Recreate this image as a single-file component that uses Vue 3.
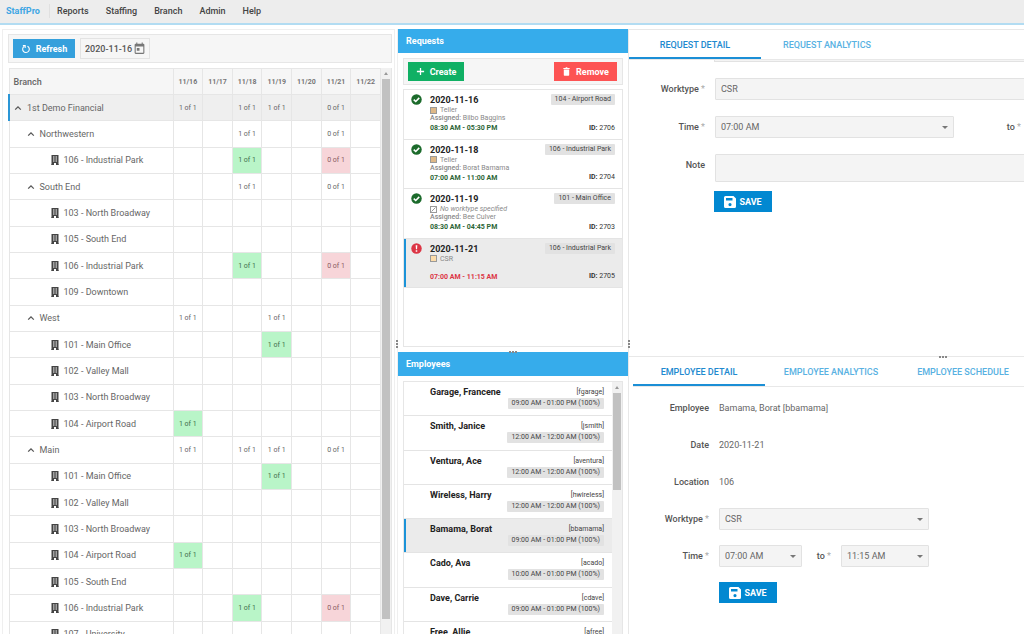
<script setup>
import { ref } from 'vue'

const days = ['11/16', '11/17', '11/18', '11/19', '11/20', '11/21', '11/22']

const row = (name, level, cells = {}) => ({ name, level, cells })
const rows = [
  row('1st Demo Financial', 0, { 0: 1, 2: 1, 3: 1, 5: 0 }),
  row('Northwestern', 1, { 2: 1, 5: 0 }),
  row('106 - Industrial Park', 2, { 2: 1, 5: 0 }),
  row('South End', 1, { 2: 1, 5: 0 }),
  row('103 - North Broadway', 2),
  row('105 - South End', 2),
  row('106 - Industrial Park', 2, { 2: 1, 5: 0 }),
  row('109 - Downtown', 2),
  row('West', 1, { 0: 1, 3: 1 }),
  row('101 - Main Office', 2, { 3: 1 }),
  row('102 - Valley Mall', 2),
  row('103 - North Broadway', 2),
  row('104 - Airport Road', 2, { 0: 1 }),
  row('Main', 1, { 0: 1, 2: 1, 3: 1, 5: 0 }),
  row('101 - Main Office', 2, { 3: 1 }),
  row('102 - Valley Mall', 2),
  row('103 - North Broadway', 2),
  row('104 - Airport Road', 2, { 0: 1 }),
  row('105 - South End', 2),
  row('106 - Industrial Park', 2, { 2: 1, 5: 0 }),
  row('107 - University', 2),
]

const cellClass = (r, i) => {
  if (r.level < 2 || !(i in r.cells)) return ''
  return r.cells[i] ? 'filled' : 'short'
}

const requests = [
  { id: 2706, date: '2020-11-16', type: 'Teller', who: 'Bilbo Baggins', time: '08:30 AM - 05:30 PM', place: '104 - Airport Road' },
  { id: 2704, date: '2020-11-18', type: 'Teller', who: 'Borat Bamama', time: '07:00 AM - 11:00 AM', place: '106 - Industrial Park' },
  { id: 2703, date: '2020-11-19', type: '', who: 'Bee Culver', time: '08:30 AM - 04:45 PM', place: '101 - Main Office' },
  { id: 2705, date: '2020-11-21', type: 'CSR', who: '', time: '07:00 AM - 11:15 AM', place: '106 - Industrial Park' },
]

const employees = [
  ['Garage, Francene', 'fgarage', '09:00 AM - 01:00 PM (100%)'],
  ['Smith, Janice', 'jsmith', '12:00 AM - 12:00 AM (100%)'],
  ['Ventura, Ace', 'aventura', '12:00 AM - 12:00 AM (100%)'],
  ['Wireless, Harry', 'hwireless', '12:00 AM - 12:00 AM (100%)'],
  ['Bamama, Borat', 'bbamama', '09:00 AM - 01:00 PM (100%)'],
  ['Cado, Ava', 'acado', '10:00 AM - 01:00 PM (100%)'],
  ['Dave, Carrie', 'cdave', '09:00 AM - 01:00 PM (100%)'],
  ['Free, Allie', 'afree', '09:00 AM - 01:00 PM (100%)'],
]

const startDate = ref('2020-11-16')
const requestId = ref(2705)
const employeeId = ref('bbamama')
</script>

<template>
  <div class="app">
    <header class="nav">
      <a class="brand" href="#">StaffPro</a>
      <nav class="menu">
        <a v-for="m in ['Reports', 'Staffing', 'Branch', 'Admin', 'Help']" :key="m" href="#">{{ m }}</a>
      </nav>
    </header>

    <main class="work">
      <section class="branches">
        <div class="bar">
          <button class="btn refresh" type="button">
            <svg viewBox="0 0 24 24" width="10" height="10" fill="none" stroke="#fff" stroke-width="2.6">
              <path d="M15.5 5.2A8 8 0 1 1 8.2 5.3" />
              <path d="M4.5 3.5H10V9.5" />
            </svg>
            Refresh
          </button>
          <label class="date">
            <input v-model="startDate" type="text" aria-label="Start date" />
            <svg viewBox="0 0 24 24" width="13" height="13" fill="#777">
              <path d="M19 3h-1V1h-2v2H8V1H6v2H5a2 2 0 0 0-2 2v15a2 2 0 0 0 2 2h14a2 2 0 0 0 2-2V5a2 2 0 0 0-2-2zm0 17H5V8.500h14zM7 11h5v5H7z" />
            </svg>
          </label>
        </div>
        <div class="gridbox">
          <table>
            <thead>
              <tr>
                <th class="name">Branch</th>
                <th v-for="d in days" :key="d">{{ d }}</th>
              </tr>
            </thead>
            <tbody>
              <tr v-for="(r, n) in rows" :key="n" :class="{ current: n === 0 }">
                <td class="name" :class="'level' + r.level">
                  <span>
                    <svg v-if="r.level < 2" viewBox="0 0 8 8" width="8" height="8" fill="none" stroke="#555" stroke-width="1.300">
                      <path d="M1.200 5.600 4 2.900l2.800 2.700" />
                    </svg>
                    <svg v-else viewBox="0 0 16 20" width="8" height="10">
                      <path fill="#444" fill-rule="evenodd" d="M1 0h14v19h1v1h-6v-4H6v4H0v-1h1zM4 3v2h2V3zm3 0v2h2V3zm3 0v2h2V3zM4 7v2h2V7zm3 0v2h2V7zm3 0v2h2V7zM4 11v2h2v-2zm3 0v2h2v-2zm3 0v2h2v-2z" />
                    </svg>
                    {{ r.name }}
                  </span>
                </td>
                <td v-for="(d, i) in days" :key="d" :class="cellClass(r, i)">
                  {{ i in r.cells ? r.cells[i] + ' of 1' : '' }}
                </td>
              </tr>
            </tbody>
          </table>
          <div class="scroll"><i class="up"></i><i class="thumb long"></i></div>
        </div>
      </section>

      <div class="split"><i class="dots"></i></div>

      <section class="lists">
        <div class="requests">
          <h2>Requests</h2>
          <div class="bar actions">
            <button class="btn create" type="button">
              <svg viewBox="0 0 10 10" width="9" height="9" stroke="#fff" stroke-width="1.400"><path d="M5 1v8M1 5h8" /></svg>
              Create
            </button>
            <button class="btn remove" type="button">
              <svg viewBox="0 0 10 10" width="9" height="9" fill="#fff"><path d="M1.500 1h2.300l.5-.6h1.400l.5.6h2.300v1.100h-7zM2 2.700h6V9a.8.800 0 0 1-.8.800H2.800A.8.800 0 0 1 2 9z" /></svg>
              Remove
            </button>
          </div>
          <div class="box">
            <ul class="reqlist">
              <li v-for="r in requests" :key="r.id" :class="{ on: r.id === requestId }" @click="requestId = r.id">
                <svg class="state" viewBox="0 0 20 20" width="11" height="11">
                  <circle cx="10" cy="10" r="9.500" :fill="r.who ? '#1c6b2c' : '#dc3545'" />
                  <path v-if="r.who" d="M5 10.300 8.600 13.700 15 7" fill="none" stroke="#fff" stroke-width="2.800" />
                  <path v-else d="M8.500 4h3l-.5 7.500H9zM8.600 13h2.800v2.800H8.600z" fill="#fff" />
                </svg>
                <div class="info">
                  <b class="day">{{ r.date }}</b>
                  <span class="type" :class="{ none: !r.type }">
                    <svg viewBox="0 0 7 7" width="7" height="7">
                      <rect x=".5" y=".5" width="6" height="6" :fill="r.type === 'Teller' ? '#deb887' : r.type ? '#fcdcaa' : '#fff'" stroke="#999" />
                      <path v-if="!r.type" d="M1.500 5.500l4-4" stroke="#999" />
                    </svg>
                    {{ r.type || 'No worktype specified' }}
                  </span>
                  <span class="who"><template v-if="r.who"><b>Assigned:</b> {{ r.who }}</template></span>
                  <b class="time" :class="{ open: !r.who }">{{ r.time }}</b>
                </div>
                <div class="side">
                  <span class="tag">{{ r.place }}</span>
                  <span class="id"><b>ID:</b> {{ r.id }}</span>
                </div>
              </li>
            </ul>
          </div>
          <div class="hsplit"><i class="hdots"></i></div>
        </div>

        <div class="employees">
          <h2>Employees</h2>
          <div class="box">
            <ul class="emplist">
              <li v-for="e in employees" :key="e[1]" :class="{ on: e[1] === employeeId }" @click="employeeId = e[1]">
                <b class="person">{{ e[0] }}</b>
                <span class="login">[{{ e[1] }}]</span>
                <span class="tag hours">{{ e[2] }}</span>
              </li>
            </ul>
            <div class="scroll"><i class="up"></i><i class="thumb short-thumb"></i></div>
          </div>
        </div>
      </section>

      <div class="split thin"><i class="dots"></i></div>

      <section class="details">
        <div class="pane request-pane">
          <div class="tabs">
            <button class="active" type="button">REQUEST DETAIL</button>
            <button type="button">REQUEST ANALYTICS</button>
          </div>
          <form class="form wide" @submit.prevent>
            <div class="cut"></div>
            <div class="field">
              <label for="rw">Worktype <em>*</em></label>
              <input id="rw" class="ctl" type="text" value="CSR" />
            </div>
            <div class="field">
              <label for="rf">Time <em>*</em></label>
              <div class="drop half"><select id="rf" class="ctl"><option>07:00 AM</option></select></div>
              <label class="far" for="rt">to <em>*</em></label>
              <div class="drop half"><select id="rt" class="ctl"><option>11:15 AM</option></select></div>
            </div>
            <div class="field">
              <label for="rn">Note</label>
              <textarea id="rn" class="ctl note"></textarea>
            </div>
            <button class="save" type="submit">
              <svg viewBox="0 0 12 12" width="12" height="12"><path fill="#fff" fill-rule="evenodd" d="M1.500 0h8L12 2.500v8a1.500 1.500 0 0 1-1.500 1.500h-9A1.500 1.500 0 0 1 0 10.500v-9A1.500 1.500 0 0 1 1.500 0zM2 2v2.500h6.500V2zM6 7a1.600 1.600 0 1 0 0 3.200A1.600 1.600 0 0 0 6 7z" /></svg>
              SAVE
            </button>
          </form>
          <div class="hsplit"><i class="hdots low"></i></div>
        </div>

        <div class="pane employee-pane">
          <div class="tabs">
            <button class="active" type="button">EMPLOYEE DETAIL</button>
            <button type="button">EMPLOYEE ANALYTICS</button>
            <button type="button">EMPLOYEE SCHEDULE</button>
          </div>
          <form class="form narrow" @submit.prevent>
            <div class="field"><span class="label">Employee</span><output>Bamama, Borat [bbamama]</output></div>
            <div class="field"><span class="label">Date</span><output>2020-11-21</output></div>
            <div class="field"><span class="label">Location</span><output>106</output></div>
            <div class="field">
              <label for="ew">Worktype <em>*</em></label>
              <div class="drop"><select id="ew" class="ctl"><option>CSR</option></select></div>
            </div>
            <div class="field">
              <label for="ef">Time <em>*</em></label>
              <div class="drop from"><select id="ef" class="ctl"><option>07:00 AM</option></select></div>
              <label class="near" for="et">to <em>*</em></label>
              <div class="drop"><select id="et" class="ctl"><option>11:15 AM</option></select></div>
            </div>
            <button class="save" type="submit">
              <svg viewBox="0 0 12 12" width="12" height="12"><path fill="#fff" fill-rule="evenodd" d="M1.500 0h8L12 2.500v8a1.500 1.500 0 0 1-1.500 1.500h-9A1.500 1.500 0 0 1 0 10.500v-9A1.500 1.500 0 0 1 1.500 0zM2 2v2.500h6.500V2zM6 7a1.600 1.600 0 1 0 0 3.200A1.600 1.600 0 0 0 6 7z" /></svg>
              SAVE
            </button>
          </form>
        </div>
      </section>
    </main>
  </div>
</template>

<style>
html, body { overflow: hidden; background: #fff; }
</style>

<style scoped>
.app {
  height: 100vh;
  display: flex;
  flex-direction: column;
  overflow: hidden;
  font: 9px/12px Roboto, "Liberation Sans", sans-serif;
  color: #666;
}
.app *, .app *::after { box-sizing: border-box; }
button, input, select, textarea { font: inherit; color: inherit; margin: 0; border: 0; border-radius: 0; outline: 0; }
button { cursor: pointer; }
b, th { font-weight: 700; }
em { font-style: normal; color: #aaa; font-weight: 400; }
svg { display: block; flex: none; }
ul { list-style: none; margin: 0; padding: 0; }

.nav {
  flex: none;
  height: 25px;
  display: flex;
  align-items: center;
  background: #ededed;
  border-bottom: 2px solid #b2dcf2;
  padding: 0 0 1px 6px;
}
.nav a { text-decoration: none; color: #444; font-weight: 500; }
.nav .brand { color: #3ea6e4; font-weight: 700; width: 44px; border-right: 1px solid #e0e0e0; line-height: 14px; }
.menu { display: flex; gap: 17px; padding-left: 7px; }

.work { flex: 1; min-height: 0; display: flex; padding-top: 4px; }

.branches {
  flex: none;
  width: 393px;
  margin-left: 2px;
  padding: 4px 2px 0 5px;
  border: 1px solid #efefef;
  border-width: 1px 1px 0 1px;
  overflow: hidden;
}
.bar { display: flex; align-items: center; background: #f6f6f6; border: 1px solid #e6e6e6; }
.branches .bar { height: 29px; padding: 0 4px; gap: 5px; }
.btn {
  display: flex;
  align-items: center;
  justify-content: center;
  gap: 5px;
  height: 19px;
  padding: 0;
  color: #fff;
  font-weight: 700;
}
.refresh { width: 62px; background: #35a0dc; }
.date { display: flex; align-items: center; width: 70px; height: 21px; border: 1px solid #e3e3e3; padding: 0 3px 0 4px; }
.date input { flex: 1; min-width: 0; padding: 0; background: none; }

.gridbox { display: flex; margin-top: 5px; border-right: 1px solid #e6e6e6; }
table { flex: 1; min-width: 0; height: 580px; table-layout: fixed; border-collapse: collapse; }
th, td { border: 1px solid #e6e6e6; padding: 0; text-align: center; font-size: 7px; line-height: 10px; }
thead { background: #f6f6f6; }
thead tr { height: 26px; }
th { color: #777; }
.name { width: 164px; text-align: left; font-size: 9px; }
th.name { padding-left: 4px; color: #666; font-weight: 500; }
.name span { display: flex; align-items: center; gap: 5px; }
.level0 { padding-left: 4px; }
.level1 { padding-left: 17px; }
.level2 { padding-left: 41px; }
.current td { background: #efefef; }
.current .name { border-left: 2px solid #2b96d6; }
.filled { background: #b9f5c8; color: #41704c; }
.short { background: #f7d5d9; color: #8a5a5f; }

.scroll { flex: none; width: 10px; background: #f1f1f1; display: flex; flex-direction: column; align-items: center; }
.up { border: 2px solid transparent; border-bottom: 3px solid #999; border-top: 0; margin: 4px 0; }
.thumb { width: 8px; background: #c1c1c1; }
.long { height: 540px; }
.short-thumb { height: 97px; }

.split { flex: none; width: 2px; position: relative; }
.thin { width: 1px; background: #e8e8e8; }
.dots { position: absolute; left: 1px; top: 311px; width: 2px; height: 8px; background: repeating-linear-gradient(#888 0 2px, transparent 2px 3px); }
.thin .dots { left: 0; }
.hsplit { position: relative; }
.hdots { position: absolute; left: 50%; top: -1px; width: 8px; height: 2px; margin-left: -4px; background: repeating-linear-gradient(90deg, #888 0 2px, transparent 2px 3px); }
.low { top: 0; }

.lists { flex: none; width: 231px; display: flex; flex-direction: column; border-left: 1px solid #efefef; }
h2 { margin: 0; padding-left: 8px; font-size: 9px; font-weight: 700; line-height: 24px; color: #fff; background: #36aceb; }
.requests { flex: none; height: 323px; display: flex; flex-direction: column; }
.actions { height: 27px; margin: 5px 5px 0; padding: 0 5px 0 4px; justify-content: space-between; }
.create { width: 56px; background: #10b064; }
.remove { width: 63px; background: #fd5353; }
.box { flex: 1; min-height: 0; margin: 5px 5px 0; border: 1px solid #e6e6e6; overflow: hidden; }
.requests .box { margin: 4px 5px 5px; }
.reqlist { display: grid; grid-auto-rows: 1fr; height: 198px; }
.reqlist li { display: flex; padding: 4px 7px 0; border-bottom: 1px solid #e4e4e4; }
li.on { background: #ebebeb; box-shadow: inset 2px 0 #1b93d8; }
.info { flex: 1; margin-left: 8px; display: flex; flex-direction: column; }
.day, .person { font-size: 9px; line-height: 12px; color: #222; }
.type { display: flex; align-items: center; gap: 3px; font-size: 7px; line-height: 8px; color: #888; }
.none { font-style: italic; }
.who { font-size: 7px; line-height: 9px; min-height: 9px; color: #888; }
.who b { font-weight: 500; }
.time { font-size: 7px; line-height: 10px; color: #2b6535; }
.open { color: #dc3545; }
.side { display: flex; flex-direction: column; align-items: flex-end; justify-content: space-between; padding-bottom: 6px; }
.tag { background: #e2e2e2; color: #444; font-size: 7px; line-height: 11px; padding: 0 4px; border-radius: 1px; }
.id { font-size: 7px; line-height: 10px; color: #333; }

.employees { flex: 1; min-height: 0; display: flex; flex-direction: column; }
.employees .box { display: flex; border-bottom: 0; }
.emplist { flex: 1; display: grid; grid-auto-rows: 1fr; height: 274px; }
.emplist li {
  display: grid;
  grid-template-columns: auto auto;
  justify-content: space-between;
  align-content: start;
  padding: 4px 8px 0 26px;
  border-bottom: 1px solid #e4e4e4;
}
.login { font-size: 7px; color: #444; text-align: right; }
.hours { grid-column: 1 / 3; justify-self: end; }

.details { flex: 1; min-width: 0; display: flex; flex-direction: column; overflow: hidden; }
.pane { min-width: 628px; border-top: 1px solid #e8e8e8; }
.request-pane { flex: none; height: 327px; display: flex; flex-direction: column; }
.request-pane .form { flex: 1; }
.employee-pane { flex: 1; padding-left: 4px; }
.tabs { display: flex; border-bottom: 1px solid #e8e8e8; height: 30px; flex: none; }
.tabs button { flex: none; width: 132px; padding: 0; background: none; font-weight: 500; color: #58b1e2; }
.tabs .active { color: #2189cf; box-shadow: inset 0 -2px #1b8fd6; }
.form { display: flex; flex-direction: column; }
.wide { width: 650px; }
.cut { height: 2px; margin-left: 85px; border: 1px solid #e2e2e2; border-top: 0; background: #f4f4f4; flex: none; }
.field { display: flex; align-items: flex-start; margin-top: 16px; }
label, .label { font-weight: 500; color: #555; }
.field label, .label { flex: none; width: 76px; text-align: right; line-height: 22px; margin-right: 10px; }
.ctl { display: block; width: 100%; height: 22px; padding: 0 5px; background: #f4f4f4; border: 1px solid #e2e2e2; border-radius: 1px; appearance: none; }
.note { height: 28px; resize: none; }
.drop { position: relative; flex: 1; }
.drop::after { content: ""; position: absolute; right: 6px; top: 10px; border: 3px solid transparent; border-top-color: #777; border-bottom: 0; }
.half { flex: none; width: 239px; }
.from { flex: none; width: 83px; }
.field .far { width: 67px; }
.field .near { width: 29px; }
.save {
  display: flex;
  align-items: center;
  justify-content: center;
  gap: 3px;
  width: 58px;
  height: 21px;
  margin: 9px 0 0 85px;
  padding: 0;
  background: #0288d1;
  color: #fff;
  font-weight: 700;
}
.narrow { width: 296px; padding-top: 10px; }
.narrow .field { margin: 0 0 15px; }
.narrow .save { margin: 0 0 0 86px; }
output { line-height: 22px; }
</style>
